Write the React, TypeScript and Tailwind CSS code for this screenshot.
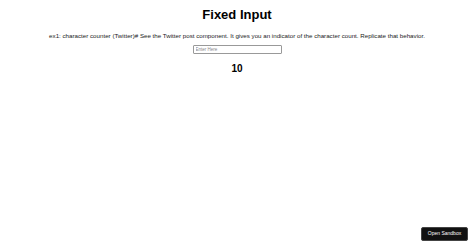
import { useState } from "react";

const MAX = 10;

export default function App() {
  const [text, setText] = useState("");

  return (
    <div className="relative min-h-[248px] bg-white font-['Liberation_Sans',Arial,sans-serif] text-black">
      <div className="flex flex-col items-center">
        <h1 className="mt-[7px] text-[13px] leading-[15px] font-bold">
          Fixed Input
        </h1>

        <p className="mt-[10px] text-[6.2px] leading-[8px] text-[#222]">
          ex1: character counter (Twitter)# See the Twitter post component. It
          gives you an indicator of the character count. Replicate that
          behavior.
        </p>

        <input
          type="text"
          value={text}
          maxLength={MAX}
          onChange={(e) => setText(e.target.value)}
          placeholder="Enter Here"
          className="mt-[5px] h-[9px] w-[89px] rounded-[1px] border border-[#999] px-[2px] text-[4.5px] leading-[7px] outline-none placeholder:text-[#888]"
        />

        <h2 className="mt-[9px] text-[10px] leading-[12px] font-bold">
          {MAX - text.length}
        </h2>
      </div>

      <button
        type="button"
        className="absolute right-[6px] bottom-[7px] h-[14px] w-[47px] rounded-[2px] border border-[#444] bg-[#111] text-[5px] text-white"
      >
        Open Sandbox
      </button>
    </div>
  );
}
